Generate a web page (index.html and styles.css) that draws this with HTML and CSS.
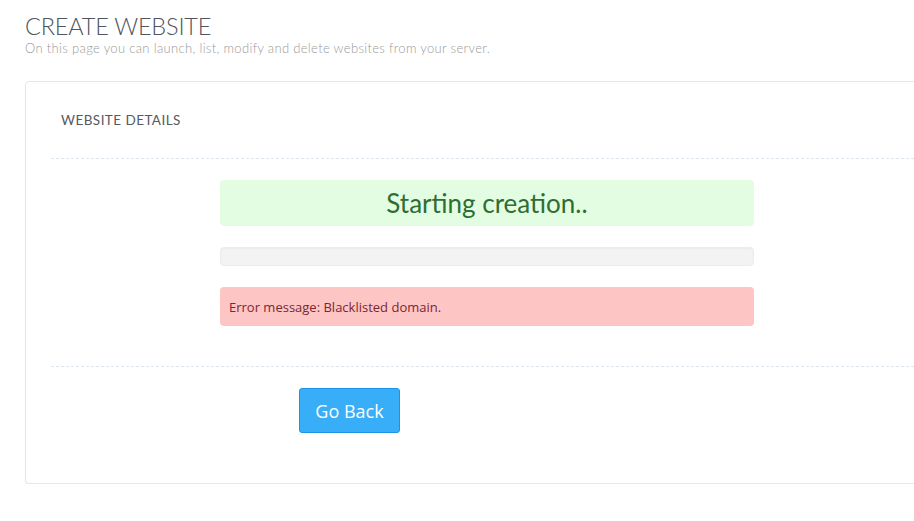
FILE: index.html
```html
<!DOCTYPE html>
<html>
<head>
<meta charset="utf-8">
<link rel="stylesheet" href="styles.css">
</head>
<body>
<div class="page-header">
  <h1 class="title">CREATE WEBSITE</h1>
  <p class="subtitle">On this page you can launch, list, modify and delete websites from your server.</p>
</div>
<div class="panel">
  <div class="panel-head">
    <h2 class="panel-title">WEBSITE DETAILS</h2>
  </div>
  <div class="panel-body">
    <div class="status-col">
      <div class="alert-success">Starting creation..</div>
      <div class="progress"></div>
      <div class="alert-danger">Error message: Blacklisted domain.</div>
    </div>
  </div>
  <div class="panel-foot">
    <button class="btn-primary" type="button">Go Back</button>
  </div>
</div>
</body>
</html>
```
FILE: styles.css
```css
html, body {
  margin: 0;
  padding: 0;
  background: #ffffff;
  overflow-x: hidden;
}
body {
  font-family: "Lato", "Open Sans", sans-serif;
  width: 914px;
}
.page-header {
  padding: 12px 0 0 25px;
}
.title {
  margin: 0;
  font-size: 23.5px;
  line-height: 28px;
  font-weight: 300;
  color: #50555e;
  letter-spacing: -0.2px;
}
.subtitle {
  margin: 0;
  font-size: 13px;
  line-height: 16px;
  font-weight: 300;
  color: #9a9a9a;
  letter-spacing: 0.33px;
}
.panel {
  margin: 25px 0 0 25px;
  width: 920px;
  border: 1px solid #e3e8ee;
  border-radius: 4px;
  box-shadow: 0 1px 1px rgba(210, 218, 230, 0.6);
  padding: 0 0 50px 25px;
  box-sizing: border-box;
}
.panel-head {
  height: 76px;
  display: flex;
  align-items: center;
  padding-left: 10px;
  border-bottom: 1px dashed #dde5ee;
}
.panel-title {
  margin: 0;
  font-size: 13.5px;
  font-weight: 400;
  color: #555a62;
  letter-spacing: 0.45px;
}
.panel-body {
  padding: 21px 0 40px 169px;
  border-bottom: 1px dashed #dde5ee;
}
.status-col {
  width: 534px;
  display: flex;
  flex-direction: column;
  gap: 21px;
}
.alert-success {
  height: 46px;
  border-radius: 4px;
  background: #e3fde3;
  color: #2e6e31;
  font-size: 26px;
  font-weight: 400;
  display: flex;
  align-items: center;
  justify-content: center;
}
.progress {
  height: 19px;
  border-radius: 4px;
  background: #f3f3f3;
  border: 1px solid #ececec;
  box-sizing: border-box;
  box-shadow: inset 0 1px 2px rgba(0, 0, 0, 0.04);
}
.alert-danger {
  height: 39px;
  border-radius: 4px;
  background: #fec5c5;
  color: #7b2631;
  font-family: "Open Sans", sans-serif;
  font-size: 13px;
  display: flex;
  align-items: center;
  padding-left: 9px;
}
.panel-foot {
  padding: 21px 0 0 248px;
}
.btn-primary {
  width: 101px;
  height: 45px;
  background: #37aef7;
  border: 1px solid #1a94e8;
  border-radius: 3px;
  color: #ffffff;
  font-family: "Open Sans", sans-serif;
  font-size: 18px;
  padding: 0;
}
```
